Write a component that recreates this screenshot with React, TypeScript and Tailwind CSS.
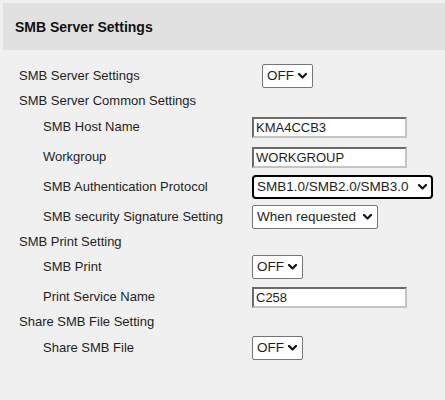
import React from 'react'

type Row =
  | { kind: 'text'; label: string; level: 1 | 2; mt: string }
  | { kind: 'input'; label: string; level: 1 | 2; mt: string; value: string }
  | {
      kind: 'select'
      label: string
      level: 1 | 2
      mt: string
      value: string
      width: string
      focused?: boolean
      offset?: boolean
    }

const rows: Row[] = [
  { kind: 'select', label: 'SMB Server Settings', level: 1, mt: 'mt-[14px]', value: 'OFF', width: 'w-[51px]', offset: true },
  { kind: 'text', label: 'SMB Server Common Settings', level: 1, mt: 'mt-[1px]' },
  { kind: 'input', label: 'SMB Host Name', level: 2, mt: 'mt-[2px]', value: 'KMA4CCB3' },
  { kind: 'input', label: 'Workgroup', level: 2, mt: 'mt-[6px]', value: 'WORKGROUP' },
  {
    kind: 'select',
    label: 'SMB Authentication Protocol',
    level: 2,
    mt: 'mt-[6px]',
    value: 'SMB1.0/SMB2.0/SMB3.0',
    width: 'w-[181px]',
    focused: true,
  },
  {
    kind: 'select',
    label: 'SMB security Signature Setting',
    level: 2,
    mt: 'mt-[6px]',
    value: 'When requested',
    width: 'w-[126px]',
  },
  { kind: 'text', label: 'SMB Print Setting', level: 1, mt: 'mt-[1px]' },
  { kind: 'select', label: 'SMB Print', level: 2, mt: 'mt-[1px]', value: 'OFF', width: 'w-[51px]' },
  { kind: 'input', label: 'Print Service Name', level: 2, mt: 'mt-[6px]', value: 'C258' },
  { kind: 'text', label: 'Share SMB File Setting', level: 1, mt: 'mt-[1px]' },
  { kind: 'select', label: 'Share SMB File', level: 2, mt: 'mt-[2px]', value: 'OFF', width: 'w-[51px]' },
]

function Chevron() {
  return (
    <svg width="9" height="6" viewBox="0 0 9 6" className="shrink-0">
      <polyline
        points="1,1 4.5,4.5 8,1"
        fill="none"
        stroke="#111"
        strokeWidth="2.2"
        strokeLinecap="round"
        strokeLinejoin="round"
      />
    </svg>
  )
}

function FakeSelect({ value, width, focused }: { value: string; width: string; focused?: boolean }) {
  return (
    <div
      className={
        focused
          ? `${width} h-[24px] flex items-center justify-between bg-white border-2 border-black rounded-[4px] pl-[3px] pr-[4px] text-[13.5px]`
          : `${width} h-[24px] flex items-center justify-between bg-white border border-[#767676] rounded-[2px] pl-[4px] pr-[5px] text-[13.5px]`
      }
    >
      <span className="leading-none whitespace-nowrap">{value}</span>
      <Chevron />
    </div>
  )
}

function TextBox({ value }: { value: string }) {
  return (
    <div className="w-[155px] h-[21px] flex items-center bg-white border-2 border-t-[#6b6b6b] border-l-[#6b6b6b] border-r-[#c4c4c4] border-b-[#c4c4c4] pl-[2px]">
      <span className="leading-none">{value}</span>
    </div>
  )
}

export default function App() {
  return (
    <div
      className="w-full h-[400px] bg-[#f0f0f0] pt-[3px] pl-[3px] text-[13px] text-[#1e1e1e]"
      style={{ fontFamily: '"Liberation Sans", Arial, sans-serif' }}
    >
      <div className="h-[47px] bg-[#e1e1e1] flex items-center pl-[12px]">
        <h2 className="text-[14px] font-bold text-[#111] mt-[1px]">SMB Server Settings</h2>
      </div>

      <div className="flex flex-col">
        {rows.map((row) => (
          <div key={row.label} className={`${row.mt} h-[24px] flex items-center`}>
            <div className={`w-[249px] shrink-0 ${row.level === 1 ? 'pl-[16px]' : 'pl-[40px]'}`}>
              {row.label}
            </div>
            {row.kind === 'input' && <TextBox value={row.value} />}
            {row.kind === 'select' && (
              <div className={row.offset ? 'ml-[10px]' : ''}>
                <FakeSelect value={row.value} width={row.width} focused={row.focused} />
              </div>
            )}
          </div>
        ))}
      </div>
    </div>
  )
}
